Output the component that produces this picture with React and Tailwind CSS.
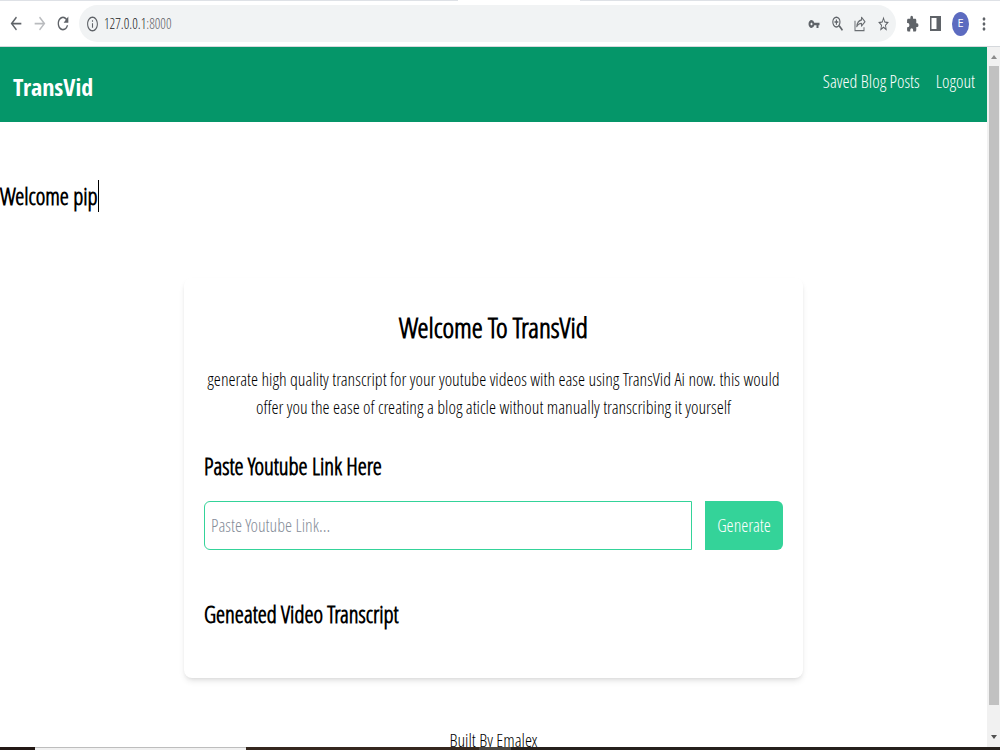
import {
  MdArrowBack,
  MdArrowForward,
  MdRefresh,
  MdInfoOutline,
  MdVpnKey,
  MdStarOutline,
  MdExtension,
  MdMoreVert,
} from "react-icons/md";

function BrowserButton({ label, className = "", children }) {
  return (
    <button type="button" aria-label={label} className={`flex shrink-0 items-center justify-center ${className}`}>
      {children}
    </button>
  );
}

function ZoomIcon() {
  return (
    <svg viewBox="0 0 20 20" preserveAspectRatio="none" className="h-[15px] w-[11px]" fill="none" stroke="#5f6368" strokeWidth="2" aria-hidden="true">
      <circle cx="8" cy="8" r="6.500" />
      <path d="M13 13l6 6" strokeWidth="2.500" />
      <path d="M8 4.500v7M4.500 8h7" />
    </svg>
  );
}

function ShareIcon() {
  return (
    <svg viewBox="0 0 24 24" preserveAspectRatio="none" className="h-4 w-3" fill="none" stroke="#6b6f73" strokeWidth="2" aria-hidden="true">
      <path d="M2 7v15h18v-5" />
      <path d="M15 2l7 6.500-7 6.500v-4c-4.500 0-7.500 1.500-9.500 5 .5-5 3.500-9 9.500-10z" strokeLinejoin="round" />
    </svg>
  );
}

function SidePanelIcon() {
  return (
    <svg viewBox="0 0 11 15" className="h-[15px] w-[11px]" aria-hidden="true">
      <path fill="#5f6368" fillRule="evenodd" d="M0 0h11v15H0zM1.500 2v11H6.500V2z" />
    </svg>
  );
}

function Toolbar() {
  return (
    <div className="flex h-[47px] shrink-0 flex-col border-b border-[#d5d8dc] bg-white">
      <div className="flex h-px shrink-0">
        <div className="w-[458px] bg-[#dee1e6]" />
        <div className="w-[122px] bg-white" />
        <div className="flex-1 bg-[#dee1e6]" />
      </div>
      <div className="flex flex-1 items-center pr-3 pl-2 text-[#5f6368]">
        <BrowserButton label="Back" className="w-4">
          <MdArrowBack preserveAspectRatio="none" className="h-[21px] w-4" />
        </BrowserButton>
        <BrowserButton label="Forward" className="ml-2 w-4 text-[#b9bbbe]">
          <MdArrowForward preserveAspectRatio="none" className="h-[21px] w-4" />
        </BrowserButton>
        <BrowserButton label="Reload" className="ml-[7px] w-4">
          <MdRefresh preserveAspectRatio="none" className="h-[21px] w-4" />
        </BrowserButton>
        <div className="ml-2 flex h-[37px] flex-1 items-center rounded-full bg-[#f1f3f4] pr-[7px] pl-[7px]">
          <BrowserButton label="Site information">
            <MdInfoOutline preserveAspectRatio="none" className="h-[18px] w-[13px]" />
          </BrowserButton>
          <div className="ml-[5px] flex-1 text-[14px] text-[#202124]">
            127.0.0.1<span className="text-[#5f6368]">:8000</span>
          </div>
          <div className="flex items-center gap-[11px]">
            <BrowserButton label="Saved passwords" className="w-3">
              <MdVpnKey preserveAspectRatio="none" className="h-4 w-3" />
            </BrowserButton>
            <BrowserButton label="Zoom" className="w-3">
              <ZoomIcon />
            </BrowserButton>
            <BrowserButton label="Share" className="w-3">
              <ShareIcon />
            </BrowserButton>
            <BrowserButton label="Bookmark" className="w-3">
              <MdStarOutline preserveAspectRatio="none" className="h-[18px] w-[13px] shrink-0" />
            </BrowserButton>
          </div>
        </div>
        <div className="ml-[10px] flex items-center gap-[11px]">
          <BrowserButton label="Extensions">
            <MdExtension preserveAspectRatio="none" className="h-[18px] w-[13px]" />
          </BrowserButton>
          <BrowserButton label="Side panel">
            <SidePanelIcon />
          </BrowserButton>
          <button
            type="button"
            aria-label="Profile"
            className="flex h-6 w-[17px] items-center justify-center rounded-[50%] bg-[#5c6bc0] font-['Open_Sans',sans-serif] text-[11px] text-white"
          >
            E
          </button>
          <BrowserButton label="Menu" className="w-2">
            <MdMoreVert preserveAspectRatio="none" className="h-5 w-4 shrink-0" />
          </BrowserButton>
        </div>
      </div>
    </div>
  );
}

function Scrollbar() {
  return (
    <div className="flex w-[13px] shrink-0 flex-col items-center bg-[#f1f1f1]" aria-hidden="true">
      <svg viewBox="0 0 12 19" className="h-[19px] w-3">
        <path d="M3 12L6 8l3 4z" fill="#8b8b8b" />
      </svg>
      <div className="w-[10px] flex-1 bg-[#c1c1c1]" />
      <svg viewBox="0 0 12 42" className="h-[42px] w-3">
        <path d="M3 30h6l-3 4z" fill="#505050" />
      </svg>
    </div>
  );
}

function Page() {
  return (
    <div className="flex min-w-0 flex-1 flex-col overflow-hidden bg-white text-black">
      <header className="flex h-[75px] shrink-0 items-start justify-between bg-[#059669] pr-3 pl-[13px] text-white">
        <h1 className="mt-6 font-['Open_Sans_Condensed','Open_Sans',sans-serif] text-[24px] leading-8 font-bold">
          TransVid
        </h1>
        <nav className="mt-5 flex gap-4 text-[18px] leading-7">
          <a href="#saved">Saved Blog Posts</a>
          <a href="#logout">Logout</a>
        </nav>
      </header>

      <h2 className="mt-[58px] flex h-8 shrink-0 items-center text-[23px] leading-8 font-semibold">
        Welcome pip
        <span className="h-8 w-px bg-black" />
      </h2>

      <main className="mx-auto mt-[66px] w-full max-w-[619px] shrink-0 rounded-lg bg-white px-5 pt-[31px] pb-12 shadow-md">
        <h2 className="text-center text-[28px] leading-9 font-semibold">Welcome To TransVid</h2>
        <p className="mt-5 text-center text-[18px] leading-7">
          generate high quality transcript for your youtube videos with ease using TransVid Ai now. this would offer
          you the ease of creating a blog aticle without manually transcribing it yourself
        </p>
        <form onSubmit={(e) => e.preventDefault()}>
          <label htmlFor="link" className="mt-[29px] block text-[23px] leading-8 font-semibold">
            Paste Youtube Link Here
          </label>
          <div className="mt-[19px] flex h-[49px] gap-[13px]">
            <input
              id="link"
              type="text"
              placeholder="Paste Youtube Link..."
              className="min-w-0 flex-1 rounded-l-md border border-[#34d399] px-[6px] text-[18px] outline-none placeholder:text-[#868d99]"
            />
            <button type="submit" className="w-[78px] rounded-r-md bg-[#34d399] text-[18px] text-white">
              Generate
            </button>
          </div>
        </form>
        <h3 className="mt-12 text-[23px] leading-8 font-semibold">Geneated Video Transcript</h3>
      </main>

      <footer className="mt-12 shrink-0 text-center text-[18px] leading-7">Built By Emalex</footer>
    </div>
  );
}

function Taskbar() {
  return (
    <div className="flex h-[3px] shrink-0 bg-[#26201c]" aria-hidden="true">
      <div className="w-[35px] bg-[#231815]" />
      <div className="w-[211px] border-t border-[#bdbdbd] bg-[#f1f1f1]" />
      <div className="w-[233px] bg-[#35281f]" />
      <div className="w-[32px] bg-[#4a4742]" />
    </div>
  );
}

export default function App() {
  return (
    <div className="flex h-screen flex-col overflow-hidden bg-white font-['Open_Sans_Condensed_Light','Open_Sans',sans-serif]">
      <Toolbar />
      <div className="flex min-h-0 flex-1">
        <Page />
        <Scrollbar />
      </div>
      <Taskbar />
    </div>
  );
}
